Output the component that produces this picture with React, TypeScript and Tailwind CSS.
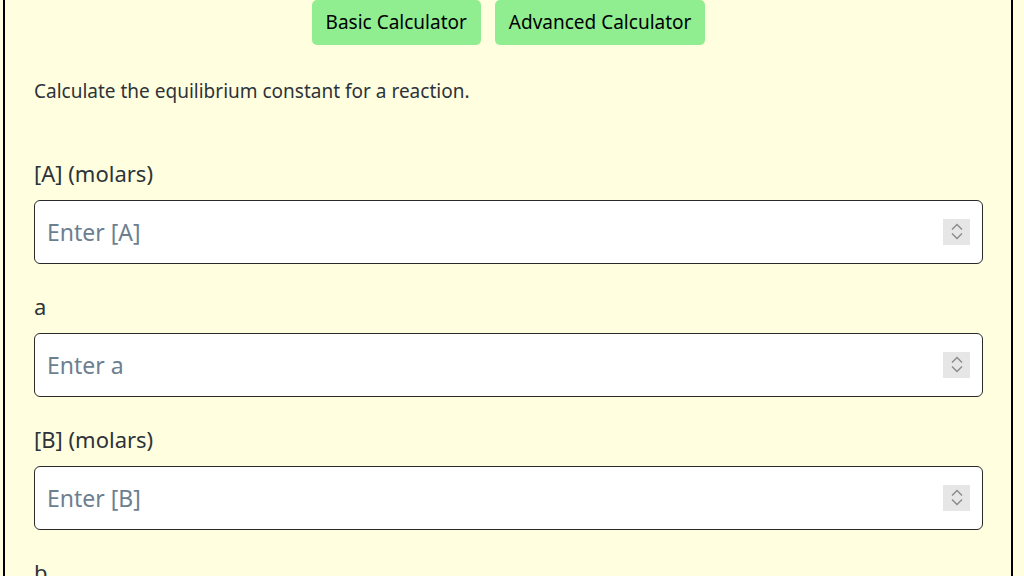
import React from 'react'

const fields = [
  { label: '[A] (molars)', placeholder: 'Enter [A]' },
  { label: 'a', placeholder: 'Enter a' },
  { label: '[B] (molars)', placeholder: 'Enter [B]' },
  { label: 'b', placeholder: 'Enter b' },
]

function Spinner() {
  return (
    <div className="absolute right-[13px] top-1/2 -translate-y-1/2 w-[27px] h-[26px] bg-[#e6e6e6] flex flex-col items-center justify-center gap-[3px]">
      <svg width="12" height="7" viewBox="0 0 12 7" fill="none">
        <path d="M1 6.5 L6 1.5 L11 6.5" stroke="#8a8a8a" strokeWidth="1.4" />
      </svg>
      <svg width="12" height="7" viewBox="0 0 12 7" fill="none">
        <path d="M1 0.5 L6 5.5 L11 0.5" stroke="#8a8a8a" strokeWidth="1.4" />
      </svg>
    </div>
  )
}

export default function App() {
  return (
    <div className="min-h-screen bg-[#ffffe0] font-['Noto_Sans',sans-serif]">
      <div className="ml-[3px] w-[1010px] border-x-2 border-black min-h-screen pl-[29px] pr-[28px]">
        {/* Calculator switch */}
        <div className="flex justify-center gap-[14px]">
          <button className="h-[45px] px-[14px] rounded-[5px] bg-[#90ee90] text-[19px] text-black">
            Basic Calculator
          </button>
          <button className="h-[45px] px-[14px] rounded-[5px] bg-[#90ee90] text-[19px] text-black">
            Advanced Calculator
          </button>
        </div>

        <p className="mt-[32px] text-[19px] text-[#2d3339]">
          Calculate the equilibrium constant for a reaction.
        </p>

        <div className="mt-[53px] flex flex-col">
          {fields.map((f) => (
            <div key={f.label} className="flex flex-col mb-[28px]">
              <label className="text-[22px] leading-[28px] text-[#2d3339] mb-[13px]">{f.label}</label>
              <div className="relative">
                <input
                  type="text"
                  placeholder={f.placeholder}
                  className="w-full h-[64px] rounded-[6px] border border-[#2a2a2a] bg-white px-[12px] text-[23px] text-[#333] placeholder:text-[#6d7f8f] outline-none"
                />
                <Spinner />
              </div>
            </div>
          ))}
        </div>
      </div>
    </div>
  )
}
